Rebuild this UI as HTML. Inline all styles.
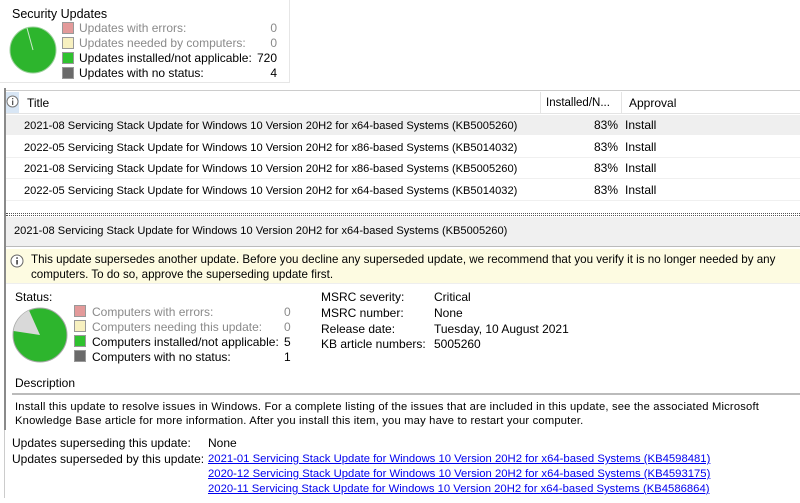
<!DOCTYPE html><html><head><style>
*{margin:0;padding:0;box-sizing:border-box}
body{width:800px;height:503px;overflow:hidden;background:#fff;font-family:"Liberation Sans",sans-serif;font-size:12px;color:#000;position:relative}
.a{position:absolute;white-space:nowrap;line-height:14px}
.g{color:#8a8a8a}
.r{font-size:11.1px}
.d{font-size:11.6px}
.e{font-size:11.2px;letter-spacing:0.19px}
.l{font-size:11.3px}
.sq{position:absolute;width:12px;height:12px;border:1px solid #999}
a{color:#0000ee;text-decoration:underline}
</style></head><body>
<div class="a" style="left:0;top:0;width:290px;height:83px;border-bottom:1px solid #e6e6e6;border-right:1px solid #e6e6e6"></div>
<div class="a" style="left:12px;top:7px;font-size:12.5px">Security Updates</div>
<svg class="a" style="left:9px;top:26px" width="48" height="48"><circle cx="24" cy="24" r="23" fill="#2db52d" stroke="#9ad09a"/><line x1="24" y1="24" x2="18" y2="2" stroke="#cfe8cf" stroke-width="1"/></svg>
<div class="sq" style="left:62px;top:22px;background:#e39a9a"></div>
<div class="sq" style="left:62px;top:37px;background:#f7f0c0"></div>
<div class="sq" style="left:62px;top:52px;background:#2fc22f"></div>
<div class="sq" style="left:62px;top:67px;background:#6a6a6a"></div>
<div class="a g" style="left:79px;top:21px">Updates with errors:</div>
<div class="a g" style="left:79px;top:36px">Updates needed by computers:</div>
<div class="a" style="left:79px;top:51px">Updates installed/not applicable:</div>
<div class="a" style="left:79px;top:66px">Updates with no status:</div>
<div class="a g" style="left:230px;width:47px;text-align:right;top:21px">0</div>
<div class="a g" style="left:230px;width:47px;text-align:right;top:36px">0</div>
<div class="a" style="left:230px;width:47px;text-align:right;top:51px">720</div>
<div class="a" style="left:230px;width:47px;text-align:right;top:66px">4</div>
<div class="a" style="left:4px;top:88px;width:2px;height:345px;background:#8a8a8a"></div>
<div class="a" style="left:6px;top:90px;width:794px;height:1px;background:#ccc"></div>
<div class="a" style="left:6px;top:92px;width:13px;height:21px;background:#d8e6f5"></div>
<svg class="a" style="left:6px;top:95px" width="13" height="13"><circle cx="6.5" cy="6.5" r="5.5" fill="#fff" stroke="#777"/><rect x="6" y="5.5" width="1.3" height="4.5" fill="#555"/><rect x="6" y="3" width="1.3" height="1.3" fill="#555"/></svg>
<div class="a" style="left:27px;top:96px">Title</div>
<div class="a" style="left:540px;top:92px;width:1px;height:21px;background:#e4e4e4"></div>
<div class="a" style="left:546px;top:96px;font-size:11.5px">Installed/N...</div>
<div class="a" style="left:621px;top:92px;width:1px;height:21px;background:#e4e4e4"></div>
<div class="a" style="left:629px;top:96px">Approval</div>
<div class="a" style="left:6px;top:113px;width:794px;height:1px;background:#e4e4e4"></div>
<div class="a" style="left:6px;top:115px;width:794px;height:20px;background:#efefef"></div>
<div class="a" style="left:6px;top:157px;width:794px;height:1px;background:#f0f0f0"></div>
<div class="a" style="left:6px;top:178px;width:794px;height:1px;background:#f0f0f0"></div>
<div class="a" style="left:6px;top:200px;width:794px;height:1px;background:#f0f0f0"></div>
<div class="a r" style="left:24px;top:119px">2021-08 Servicing Stack Update for Windows 10 Version 20H2 for x64-based Systems (KB5005260)</div>
<div class="a r" style="left:24px;top:141px">2022-05 Servicing Stack Update for Windows 10 Version 20H2 for x86-based Systems (KB5014032)</div>
<div class="a r" style="left:24px;top:162px">2021-08 Servicing Stack Update for Windows 10 Version 20H2 for x86-based Systems (KB5005260)</div>
<div class="a r" style="left:24px;top:184px">2022-05 Servicing Stack Update for Windows 10 Version 20H2 for x64-based Systems (KB5014032)</div>
<div class="a" style="left:560px;width:58px;text-align:right;top:118px">83%</div>
<div class="a" style="left:560px;width:58px;text-align:right;top:140px">83%</div>
<div class="a" style="left:560px;width:58px;text-align:right;top:161px">83%</div>
<div class="a" style="left:560px;width:58px;text-align:right;top:183px">83%</div>
<div class="a" style="left:625px;top:118px">Install</div>
<div class="a" style="left:625px;top:140px">Install</div>
<div class="a" style="left:625px;top:161px">Install</div>
<div class="a" style="left:625px;top:183px">Install</div>
<div class="a" style="left:6px;top:213px;width:794px;height:3px;border-top:1px dotted #555;border-bottom:1px dotted #555"></div>
<div class="a" style="left:6px;top:217px;width:794px;height:30px;background:#f0f0f0;border-bottom:1px solid #bbb"></div>
<div class="a r" style="left:14px;top:224px">2021-08 Servicing Stack Update for Windows 10 Version 20H2 for x64-based Systems (KB5005260)</div>
<div class="a" style="left:6px;top:249px;width:794px;height:35px;background:#fdfbe1;border-bottom:1px solid #eee"></div>
<svg class="a" style="left:10px;top:254px" width="14" height="14"><circle cx="7" cy="7" r="6" fill="#fff" stroke="#666"/><rect x="6.3" y="6" width="1.5" height="4.5" fill="#333"/><rect x="6.3" y="3.3" width="1.5" height="1.5" fill="#333"/></svg>
<div class="a d" style="left:31px;top:253px">This update supersedes another update. Before you decline any superseded update, we recommend that you verify it is no longer needed by any</div>
<div class="a d" style="left:31px;top:268px">computers. To do so, approve the superseding update first.</div>
<div class="a" style="left:15px;top:290px">Status:</div>
<svg class="a" style="left:12px;top:307px" width="56" height="56"><circle cx="28" cy="28" r="27" fill="#2db52d" stroke="#aaa"/><path d="M28 28 L1.5 24 A27 27 0 0 1 17 3.4 Z" fill="#d9d9d9"/></svg>
<div class="sq" style="left:74px;top:305px;background:#e39a9a"></div>
<div class="sq" style="left:74px;top:320px;background:#f7f0c0"></div>
<div class="sq" style="left:74px;top:335px;background:#2fc22f"></div>
<div class="sq" style="left:74px;top:350px;background:#6a6a6a"></div>
<div class="a g" style="left:92px;top:305px">Computers with errors:</div>
<div class="a g" style="left:92px;top:320px">Computers needing this update:</div>
<div class="a" style="left:92px;top:335px">Computers installed/not applicable:</div>
<div class="a" style="left:92px;top:350px">Computers with no status:</div>
<div class="a g" style="left:284px;top:305px">0</div>
<div class="a g" style="left:284px;top:320px">0</div>
<div class="a" style="left:284px;top:335px">5</div>
<div class="a" style="left:284px;top:350px">1</div>
<div class="a" style="left:321px;top:290px">MSRC severity:</div>
<div class="a" style="left:321px;top:306px">MSRC number:</div>
<div class="a" style="left:321px;top:322px">Release date:</div>
<div class="a" style="left:321px;top:337px">KB article numbers:</div>
<div class="a" style="left:434px;top:290px">Critical</div>
<div class="a" style="left:434px;top:306px">None</div>
<div class="a" style="left:434px;top:322px">Tuesday, 10 August 2021</div>
<div class="a" style="left:434px;top:337px">5005260</div>
<div class="a" style="left:15px;top:376px">Description</div>
<div class="a" style="left:12px;top:393px;width:788px;height:2px;background:#bbb"></div>
<div class="a e" style="left:15px;top:400px">Install this update to resolve issues in Windows. For a complete listing of the issues that are included in this update, see the associated Microsoft</div>
<div class="a e" style="left:15px;top:414px">Knowledge Base article for more information. After you install this item, you may have to restart your computer.</div>
<div class="a" style="left:0;top:430px;width:800px;height:73px;background:#fff"></div>
<div class="a" style="left:4px;top:430px;width:1px;height:68px;background:#ccc"></div>
<div class="a" style="left:12px;top:436px">Updates superseding this update:</div>
<div class="a" style="left:12px;top:452px">Updates superseded by this update:</div>
<div class="a" style="left:208px;top:436px">None</div>
<div class="a l" style="left:208px;top:452px"><a>2021-01 Servicing Stack Update for Windows 10 Version 20H2 for x64-based Systems (KB4598481)</a></div>
<div class="a l" style="left:208px;top:467px"><a>2020-12 Servicing Stack Update for Windows 10 Version 20H2 for x64-based Systems (KB4593175)</a></div>
<div class="a l" style="left:208px;top:482px"><a>2020-11 Servicing Stack Update for Windows 10 Version 20H2 for x64-based Systems (KB4586864)</a></div>
</body></html>
